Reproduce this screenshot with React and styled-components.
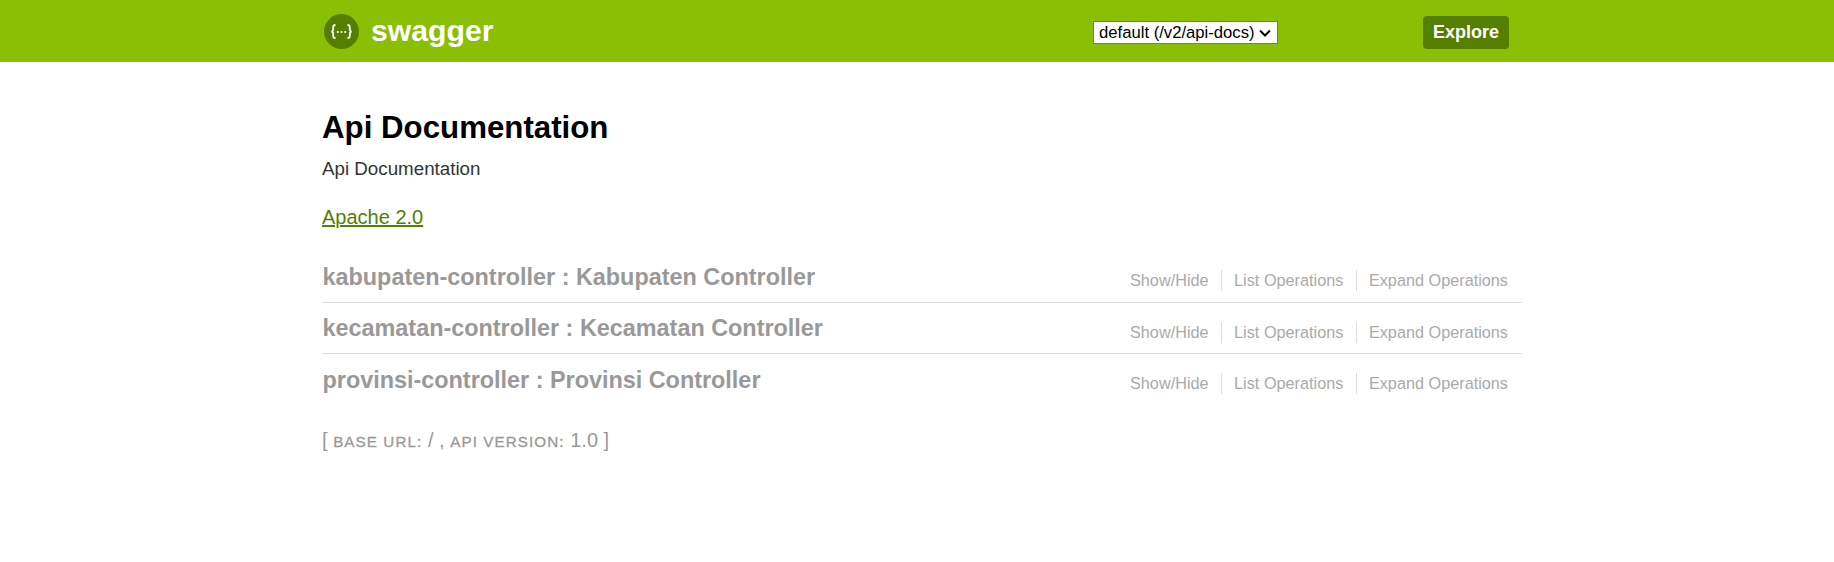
import React from 'react'
import styled, { createGlobalStyle } from 'styled-components'

const GlobalStyle = createGlobalStyle`
  html, body {
    margin: 0;
    padding: 0;
    background: white;
    font-family: "Liberation Sans", Arial, sans-serif;
  }
`

const chevron = "url(\"data:image/svg+xml,%3Csvg xmlns='http://www.w3.org/2000/svg' width='12' height='8'%3E%3Cpath d='M1 1.500l5 5 5-5' fill='none' stroke='black' stroke-width='2'/%3E%3C/svg%3E\")"

const Header = styled.header`
  height: 62px;
  background: #89bf04;
`
const HeaderInner = styled.div`
  width: 1200px;
  height: 100%;
  margin-left: 322px;
  display: flex;
  align-items: center;
`
const Logo = styled.a`
  display: flex;
  align-items: center;
  gap: 12px;
  margin-left: 2px;
  color: white;
  font-size: 30.2px;
  font-weight: bold;
  text-decoration: none;
`
const ApiSelect = styled.select`
  appearance: none;
  margin-left: auto;
  margin-top: 3px;
  width: 185px;
  height: 23px;
  padding: 0 0 0 5px;
  font-family: "Liberation Sans", Arial, sans-serif;
  font-size: 16.67px;
  color: black;
  background: white ${chevron} no-repeat right 6px center;
  border: 1px solid #767676;
  border-radius: 0;
`
const ExploreButton = styled.a`
  margin-left: 145px;
  margin-right: 13px;
  margin-top: 3px;
  width: 86px;
  height: 33px;
  display: flex;
  align-items: center;
  justify-content: center;
  border-radius: 4px;
  background: #547f00;
  color: white;
  font-size: 18px;
  font-weight: bold;
`
const Main = styled.main`
  width: 1200px;
  margin-left: 322px;
`
const Title = styled.h1`
  margin: 0;
  padding-top: 49px;
  font-size: 31.25px;
  line-height: 33px;
  font-weight: bold;
  color: black;
`
const Description = styled.p`
  margin: 14px 0 0;
  font-size: 18.75px;
  line-height: 21px;
  color: #333;
`
const License = styled.a`
  display: block;
  margin-top: 27px;
  font-size: 20px;
  line-height: 23px;
  color: #547f00;
  text-decoration: underline;
`
const ResourceList = styled.ul`
  list-style: none;
  margin: 22px 0 0;
  padding: 0;
`
const Resource = styled.li`
  height: 51.7px;
  display: flex;
  justify-content: space-between;
  box-sizing: border-box;
  border-bottom: ${props => (props.last ? 'none' : '1px solid #ddd')};
`
const ResourceName = styled.h2`
  margin: 0;
  padding: 12.5px 0 0 0.5px;
  font-size: 23.4px;
  line-height: 27px;
  font-weight: bold;
  color: #999;
`
const Actions = styled.ul`
  list-style: none;
  display: flex;
  margin: 19px 14px 0 0;
  padding: 0;
  align-self: flex-start;
`
const Action = styled.li`
  height: 21px;
  padding: 0 12.25px;
  font-size: 16.25px;
  line-height: 21px;
  color: #aaa;
  border-right: ${props => (props.last ? 'none' : '1px solid #ddd')};
  &:last-child {
    padding-right: 0;
  }
`
const Footer = styled.div`
  margin-top: 23px;
  font-size: 20px;
  line-height: 23px;
  color: #999;
`
const SmallCaps = styled.span`
  font-size: 15.2px;
  letter-spacing: 1.1px;
  text-transform: uppercase;
  -webkit-text-stroke: 0.3px #999;
`

const resources = [
  'kabupaten-controller : Kabupaten Controller',
  'kecamatan-controller : Kecamatan Controller',
  'provinsi-controller : Provinsi Controller'
]

function SwaggerLogo () {
  return (
    <svg width='35' height='35' viewBox='0 0 35 35'>
      <circle cx='17.500' cy='17.500' r='17.500' fill='#547f00' />
      <path d='M11.500 11c-1.700 0-2.300.7-2.300 2.100v2.200c0 1.300-.7 2-1.700 2.200 1 .2 1.700.9 1.700 2.200v2.200c0 1.400.6 2.100 2.300 2.100M23.500 11c1.700 0 2.300.7 2.300 2.100v2.200c0 1.300.7 2 1.700 2.200-1 .2-1.700.9-1.700 2.200v2.200c0 1.400-.6 2.100-2.300 2.100' fill='none' stroke='white' strokeWidth='1.800' />
      <circle cx='13.800' cy='18' r='1.100' fill='white' />
      <circle cx='17.500' cy='18' r='1.100' fill='white' />
      <circle cx='21.200' cy='18' r='1.100' fill='white' />
    </svg>
  )
}

export default function App () {
  return (
    <>
      <GlobalStyle />
      <Header>
        <HeaderInner>
          <Logo>
            <SwaggerLogo />
            swagger
          </Logo>
          <ApiSelect defaultValue='default'>
            <option value='default'>default (/v2/api-docs)</option>
          </ApiSelect>
          <ExploreButton>Explore</ExploreButton>
        </HeaderInner>
      </Header>
      <Main>
        <Title>Api Documentation</Title>
        <Description>Api Documentation</Description>
        <License>Apache 2.0</License>
        <ResourceList>
          {resources.map((name, i) => (
            <Resource key={name} last={i === resources.length - 1}>
              <ResourceName>{name}</ResourceName>
              <Actions>
                <Action>Show/Hide</Action>
                <Action>List Operations</Action>
                <Action last>Expand Operations</Action>
              </Actions>
            </Resource>
          ))}
        </ResourceList>
        <Footer>[ <SmallCaps>base url:</SmallCaps> / , <SmallCaps>api version:</SmallCaps> 1.0 ]</Footer>
      </Main>
    </>
  )
}
